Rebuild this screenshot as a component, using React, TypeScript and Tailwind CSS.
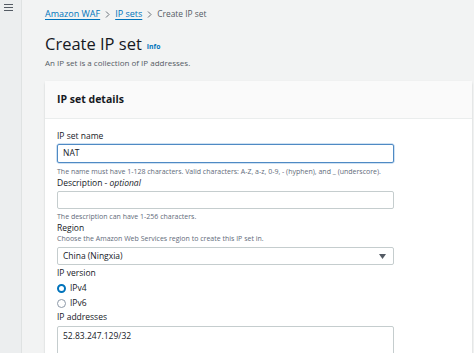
import React from "react";

const Label = ({ children, className = "" }: { children: React.ReactNode; className?: string }) => (
  <div className={`text-[8.5px] font-medium leading-[12px] text-[#16191f] ${className}`}>{children}</div>
);

const Hint = ({ children, className = "" }: { children: React.ReactNode; className?: string }) => (
  <div className={`text-[7px] leading-[10px] text-[#5f6b7a] ${className}`}>{children}</div>
);

const Radio = ({ checked, label, className = "" }: { checked?: boolean; label: string; className?: string }) => (
  <div className={`flex h-[14px] items-center gap-[4px] ${className}`}>
    <span
      className={`box-border h-[9px] w-[9px] rounded-full bg-white ${
        checked ? "border-[2.5px] border-[#0073bb]" : "border border-[#8d99a8]"
      }`}
    />
    <span className="text-[8.5px] text-[#16191f]">{label}</span>
  </div>
);

export default function App() {
  return (
    <div
      className="flex h-[353px] w-[474px] overflow-hidden bg-[#f2f3f3]"
      style={{ fontFamily: '"Open Sans", "Liberation Sans", sans-serif' }}
    >
      {/* collapsed side navigation */}
      <aside className="h-full w-[22px] shrink-0 border-r border-[#dfe2e2] bg-[#eceeef] pl-[4px] pt-[4px]">
        <svg width="10" height="7" viewBox="0 0 10 7">
          <path d="M0 0.5h9M0 3.5h9M0 6.5h9" stroke="#545b64" strokeWidth="1" />
        </svg>
      </aside>

      <main className="flex-1 pl-[23px] pr-[2px]">
        {/* breadcrumbs */}
        <nav className="mt-[8px] flex h-[12px] items-center text-[9px] font-medium leading-[12px]">
          <span className="text-[#0073bb] underline decoration-[#0073bb] underline-offset-[2px]">Amazon WAF</span>
          <svg className="mx-[5px]" width="5" height="7" viewBox="0 0 5 7">
            <path d="M1 0.5l3 3-3 3" fill="none" stroke="#687078" strokeWidth="1" />
          </svg>
          <span className="text-[#0073bb] underline decoration-[#0073bb] underline-offset-[2px]">IP sets</span>
          <svg className="mx-[5px]" width="5" height="7" viewBox="0 0 5 7">
            <path d="M1 0.5l3 3-3 3" fill="none" stroke="#687078" strokeWidth="1" />
          </svg>
          <span className="text-[8.4px] text-[#545b64]">Create IP set</span>
        </nav>

        {/* page header */}
        <div className="mt-[13px] flex h-[22px] items-end gap-[5px]">
          <h1 className="text-[16.5px] leading-[22px] text-[#16191f]">Create IP set</h1>
          <span className="mb-[3px] text-[6.8px] font-bold leading-[10px] text-[#0073bb]">Info</span>
        </div>
        <p className="mt-[3px] text-[8px] leading-[10px] text-[#545b64]">
          An IP set is a collection of IP addresses.
        </p>

        {/* container */}
        <section className="mt-[13px] rounded-t-[3px] bg-white shadow-[0_1px_2px_rgba(0,28,36,0.2)]">
          <div className="flex h-[38px] items-center border-b border-[#eaeded] bg-[#fafafa] px-[12px]">
            <h2 className="text-[10.5px] font-bold text-[#16191f]">IP set details</h2>
          </div>

          <div className="px-[12px] pb-[20px] pt-[11px]">
            <Label>IP set name</Label>
            <div className="mt-[2px] box-border flex h-[19px] w-[337px] items-center rounded-[2px] border border-[#4f8ac4] px-[5px] text-[8.5px] font-medium text-[#16191f] shadow-[0_0_0_0.5px_#9fc3e6]">
              NAT
            </div>
            <Hint className="mt-[4px]">
              The name must have 1-128 characters. Valid characters: A-Z, a-z, 0-9, - (hyphen), and _ (underscore).
            </Hint>

            <Label>
              Description - <i>optional</i>
            </Label>
            <div className="mt-[2px] box-border h-[18px] w-[337px] rounded-[2px] border border-[#c5cdce]" />
            <Hint className="mt-[3px]">The description can have 1-256 characters.</Hint>

            <Label>Region</Label>
            <Hint>Choose the Amazon Web Services region to create this IP set in.</Hint>
            <div className="mt-[3px] box-border flex h-[18px] w-[337px] items-center justify-between rounded-[2px] border border-[#c5cdce] pl-[5px] pr-[7px] text-[8.5px] font-medium text-[#16191f]">
              <span>China (Ningxia)</span>
              <svg width="7" height="5" viewBox="0 0 7 5">
                <path d="M0 0h7L3.5 5z" fill="#545b64" />
              </svg>
            </div>

            <Label className="mt-[2px]">IP version</Label>
            <Radio className="mt-[2px]" checked label="IPv4" />
            <Radio className="mt-[1px]" label="IPv6" />

            <Label className="mt-[1px]">IP addresses</Label>
            <div className="mt-[3px] box-border h-[60px] w-[337px] rounded-[2px] border border-[#c5cdce] px-[5px] pt-[3px] text-[8.5px] font-medium leading-[12px] text-[#16191f]">
              52.83.247.129/32
            </div>
          </div>
        </section>
      </main>
    </div>
  );
}
